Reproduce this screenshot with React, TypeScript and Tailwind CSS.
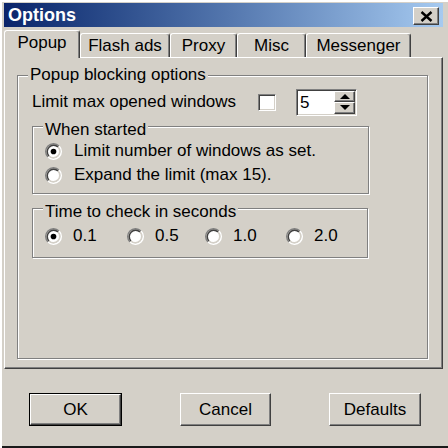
import React from "react";

type TabDef = { label: string; width: string; selected?: boolean };

const TABS: TabDef[] = [
  { label: "Popup", width: "w-[76px]", selected: true },
  { label: "Flash ads", width: "w-[90px]" },
  { label: "Proxy", width: "w-[67px]" },
  { label: "Misc", width: "w-[69px]" },
  { label: "Messenger", width: "w-[105px]" },
];

const INTERVALS = [
  { label: "0.1", width: "w-[82px]", checked: true },
  { label: "0.5", width: "w-[78px]" },
  { label: "1.0", width: "w-[81px]" },
  { label: "2.0", width: "w-[70px]" },
];

// classic 3d bevels
const RAISED =
  "border border-t-white border-l-white border-r-[#404040] border-b-[#404040] shadow-[inset_-1px_-1px_0_#808080]";
const SUNKEN =
  "border border-t-[#808080] border-l-[#808080] border-r-white border-b-white shadow-[inset_1px_1px_0_#404040,inset_-1px_-1px_0_#d4d0c8]";
const ETCHED = "border border-[#808080] shadow-[inset_1px_1px_0_#fff,1px_1px_0_#fff]";

function Radio({ checked }: { checked?: boolean }) {
  return (
    <svg width="17" height="17" viewBox="0 0 12 12" className="shrink-0">
      <circle cx="6" cy="6" r="4.3" fill="#fff" />
      <path d="M2.11 9.89A5.5 5.5 0 0 1 9.89 2.11" stroke="#808080" fill="none" />
      <path d="M9.89 2.11A5.5 5.5 0 0 1 2.11 9.89" stroke="#fff" fill="none" />
      <path d="M2.82 9.18A4.5 4.5 0 0 1 9.18 2.82" stroke="#404040" fill="none" />
      <path d="M9.18 2.82A4.5 4.5 0 0 1 2.82 9.18" stroke="#d4d0c8" fill="none" />
      {checked && <circle cx="6" cy="6" r="2" fill="#000" />}
    </svg>
  );
}

function SpinButton({ up }: { up?: boolean }) {
  return (
    <div className={`flex flex-1 items-center justify-center bg-[#d4d0c8] ${RAISED}`}>
      <svg width="10" height="5" viewBox="0 0 10 5">
        <path d={up ? "M5 0L10 5H0Z" : "M0 0H10L5 5Z"} fill="#000" />
      </svg>
    </div>
  );
}

function Button({ label, width, isDefault }: { label: string; width: string; isDefault?: boolean }) {
  const face = (
    <div className={`flex h-full w-full items-center justify-center bg-[#d4d0c8] ${RAISED}`}>
      {label}
    </div>
  );
  return isDefault ? (
    <div className={`h-[33px] ${width} border border-black`}>{face}</div>
  ) : (
    <div className={`h-[33px] ${width}`}>{face}</div>
  );
}

export default function App() {
  return (
    <div className="h-[448px] w-[448px] overflow-hidden bg-[#d4d0c8] pl-[4px] pt-[3px] font-['Liberation_Sans',Arial,sans-serif] text-[17px] leading-[20px] text-black shadow-[inset_2px_2px_0_#fff,inset_0_-2px_0_#1a1a1a]">
      {/* title bar */}
      <div className="flex h-[24px] w-[439px] items-center justify-between bg-linear-to-r from-[#0a246a] to-[#a6caf0] pl-[4px] pr-[4px]">
        <span className="text-[18px] font-bold text-white">Options</span>
        <div className={`mt-[2px] flex h-[18px] w-[26px] items-center justify-center bg-[#d4d0c8] ${RAISED}`}>
          <svg width="13" height="11" viewBox="0 0 13 11">
            <path d="M1.5 1L11.5 10M11.5 1L1.5 10" stroke="#000" strokeWidth="2.4" />
          </svg>
        </div>
      </div>

      {/* tabs */}
      <div className="flex h-[30px] items-end">
        {TABS.map((tab) =>
          tab.selected ? (
            <div
              key={tab.label}
              className={`relative z-10 -mb-px flex h-[28px] ${tab.width} items-center justify-center rounded-t-[3px] border-l border-t border-r border-l-white border-t-white border-r-[#404040] bg-[#d4d0c8] pb-[4px] shadow-[inset_-1px_0_0_#808080]`}
            >
              {tab.label}
            </div>
          ) : (
            <div
              key={tab.label}
              className={`flex h-[24px] ${tab.width} items-center justify-center rounded-t-[3px] border-l border-t border-r border-l-white border-t-white border-r-[#404040] shadow-[inset_-1px_0_0_#808080]`}
            >
              {tab.label}
            </div>
          ),
        )}
      </div>

      {/* tab page */}
      <div className={`h-[312px] w-[439px] pl-[12px] pt-[7px] ${RAISED}`}>
        <fieldset className={`h-[294px] w-[411px] ${ETCHED}`}>
          <legend className="ml-[10px]">
            <span className="bg-[#d4d0c8] px-[2px]">Popup blocking options</span>
          </legend>

          <div className="mt-[4px] flex h-[26px] items-center pl-[14px]">
            <span className="w-[226px]">Limit max opened windows</span>
            <div className={`h-[17px] w-[18px] bg-white ${SUNKEN}`} />
            <div className={`ml-[20px] flex h-[27px] w-[61px] bg-white p-px ${SUNKEN}`}>
              <span className="flex-1 pl-[2px] leading-[23px]">5</span>
              <div className="flex w-[21px] flex-col">
                <SpinButton up />
                <SpinButton />
              </div>
            </div>
          </div>

          <fieldset className={`-mt-[3px] ml-[14px] h-[82px] w-[337px] ${ETCHED}`}>
            <legend className="ml-[10px] pt-[8px]">
              <span className="bg-[#d4d0c8] px-[2px]">When started</span>
            </legend>
            <div className="-mt-px flex h-[24px] items-center pl-[12px]">
              <Radio checked />
              <span className="ml-[12px]">Limit number of windows as set.</span>
            </div>
            <div className="flex h-[24px] items-center pl-[12px]">
              <Radio />
              <span className="ml-[12px]">Expand the limit (max 15).</span>
            </div>
          </fieldset>

          <fieldset className={`ml-[14px] h-[64px] w-[336px] ${ETCHED}`}>
            <legend className="ml-[10px] pt-[8px]">
              <span className="bg-[#d4d0c8] px-[2px]">Time to check in seconds</span>
            </legend>
            <div className="mt-[2px] flex h-[24px] items-center pl-[12px]">
              {INTERVALS.map((item) => (
                <div key={item.label} className={`flex ${item.width} items-center`}>
                  <Radio checked={item.checked} />
                  <span className="ml-[11px]">{item.label}</span>
                </div>
              ))}
            </div>
          </fieldset>
        </fieldset>
      </div>

      {/* dialog buttons */}
      <div className="mt-[24px] flex">
        <div className="ml-[25px]">
          <Button label="OK" width="w-[93px]" isDefault />
        </div>
        <div className="ml-[58px]">
          <Button label="Cancel" width="w-[91px]" />
        </div>
        <div className="ml-[58px]">
          <Button label="Defaults" width="w-[92px]" />
        </div>
      </div>
    </div>
  );
}
